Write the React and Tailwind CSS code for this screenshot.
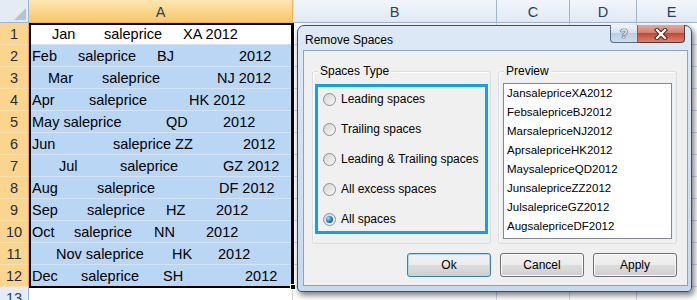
import React from 'react';

const rows = [
  [[52, 'Jan'], [104, 'saleprice'], [183, 'XA 2012']],
  [[32, 'Feb'], [78, 'saleprice'], [157, 'BJ'], [239, '2012']],
  [[48, 'Mar'], [102, 'saleprice'], [217, 'NJ 2012']],
  [[32, 'Apr'], [89, 'saleprice'], [189, 'HK 2012']],
  [[32, 'May saleprice'], [166, 'QD'], [223, '2012']],
  [[32, 'Jun'], [113, 'saleprice ZZ'], [243, '2012']],
  [[59, 'Jul'], [120, 'saleprice'], [223, 'GZ 2012']],
  [[32, 'Aug'], [97, 'saleprice'], [219, 'DF 2012']],
  [[32, 'Sep'], [87, 'saleprice'], [166, 'HZ'], [216, '2012']],
  [[32, 'Oct'], [74, 'saleprice'], [154, 'NN'], [206, '2012']],
  [[56, 'Nov saleprice'], [172, 'HK'], [218, '2012']],
  [[32, 'Dec'], [81, 'saleprice'], [163, 'SH'], [245, '2012']],
];

const preview = [
  'JansalepriceXA2012',
  'FebsalepriceBJ2012',
  'MarsalepriceNJ2012',
  'AprsalepriceHK2012',
  'MaysalepriceQD2012',
  'JunsalepriceZZ2012',
  'JulsalepriceGZ2012',
  'AugsalepriceDF2012',
];

const options = [
  'Leading spaces',
  'Trailing spaces',
  'Leading & Trailing spaces',
  'All excess spaces',
  'All spaces',
];

// cell A starts at x = 29
function CellText({ tokens }) {
  return (
    <div className="flex h-full items-center pt-[2px] whitespace-nowrap overflow-hidden">
      {tokens.map(([x, t], i) => (
        <span
          key={i}
          className="shrink-0 whitespace-pre"
          style={{
            marginLeft: i === 0 ? x - 29 : 0,
            width: i < tokens.length - 1 ? tokens[i + 1][0] - x : undefined,
          }}
        >
          {t}
        </span>
      ))}
    </div>
  );
}

function Radio({ checked }) {
  return (
    <div className="w-[13px] h-[13px] rounded-full border border-[#8f8f8f] bg-[linear-gradient(135deg,#d4d4d4,#f7f7f7)] flex items-center justify-center shrink-0">
      {checked && (
        <div className="w-[7px] h-[7px] rounded-full bg-[radial-gradient(circle_at_35%_35%,#9bdcff,#1a78c2_55%,#0a3f6e)]" />
      )}
    </div>
  );
}

function Button({ label, isDefault }) {
  return (
    <div
      className={
        'w-[84px] h-[24px] rounded-[3px] border flex items-center justify-center text-[12px] text-black bg-[linear-gradient(#f2f2f2,#ebebeb_50%,#dddddd_50%,#cfcfcf)] ' +
        (isDefault
          ? 'border-[#3c7fb1] shadow-[inset_0_0_0_1px_#a6dcf7]'
          : 'border-[#707070] shadow-[inset_0_0_0_1px_#fbfbfb]')
      }
    >
      {label}
    </div>
  );
}

export default function App() {
  const headCell = 'h-[23px] pt-[3px] border-r border-b border-[#9eb6ce] flex items-center justify-center text-[#27415f] bg-[linear-gradient(#f3f6fb,#e1e9f4)]';

  return (
    <div className="relative w-[697px] h-[300px] overflow-hidden bg-white font-['Liberation_Sans',Arial,sans-serif]">
      {/* sheet */}
      <div className="grid grid-cols-[29px_264px_204px_73px_67px_70px] w-[707px] text-[14.5px]">
        <div className="h-[23px] border-r border-b border-[#9eb6ce] bg-[#e4ebf5] flex items-end justify-end pr-[2px] pb-[2px]">
          <svg width="12" height="12" viewBox="0 0 12 12">
            <polygon points="12,0 12,12 0,12" fill="#b4c2d4" />
          </svg>
        </div>
        <div className="h-[23px] pt-[3px] border-r border-b border-[#f0b54d] flex items-center justify-center text-[#27415f] bg-[linear-gradient(#fce6b2,#f7c866)]">A</div>
        <div className={headCell}>B</div>
        <div className={headCell}>C</div>
        <div className={headCell}>D</div>
        <div className={headCell}>E</div>

        {rows.map((tokens, i) => (
          <React.Fragment key={i}>
            <div className="h-[22px] pt-[2px] border-r border-b border-r-[#e6a83d] border-b-[#f6e0ad] bg-[#fbd58d] flex items-center justify-center text-[#1e2d42]">
              {i + 1}
            </div>
            <div className={'h-[22px] border-r border-b border-[#d5e3f4] text-black ' + (i === 0 ? 'bg-white' : 'bg-[#bad6f5]')}>
              <CellText tokens={tokens} />
            </div>
            <div className="h-[22px] border-r border-b border-[#d0d7e5]" />
            <div className="h-[22px] border-r border-b border-[#d0d7e5]" />
            <div className="h-[22px] border-r border-b border-[#d0d7e5]" />
            <div className="h-[22px] border-r border-b border-[#d0d7e5]" />
          </React.Fragment>
        ))}
        <div className="h-[22px] pt-[2px] border-r border-b border-[#9eb6ce] bg-[#e4ecf7] flex items-center justify-center text-[#27415f]">13</div>
        <div className="h-[22px] border-r border-b border-[#d0d7e5]" />
        <div className="h-[22px] border-r border-b border-[#d0d7e5]" />
        <div className="h-[22px] border-r border-b border-[#d0d7e5]" />
        <div className="h-[22px] border-r border-b border-[#d0d7e5]" />
        <div className="h-[22px] border-r border-b border-[#d0d7e5]" />
      </div>

      {/* selection border */}
      <div className="absolute left-[29px] top-[23px] w-[265px] h-[265px] border-2 border-r-[3px] border-black">
        <div className="absolute -right-[5px] -bottom-[4px] w-[6px] h-[6px] bg-black border border-white" />
      </div>

      {/* dialog */}
      <div className="absolute left-[297px] top-[25px] w-[395px] h-[267px] rounded-t-[7px] rounded-b-[4px] border border-[#3d4f64] bg-[linear-gradient(180deg,#dde9f6,#c6d9ef)] shadow-[2px_3px_6px_rgba(0,0,0,0.55)] flex flex-col pl-[5px] pr-[3px] pb-[5px] text-[12px]">
        <div className="h-[24px] flex items-start">
          <span className="pt-[7px] pl-[2px] leading-[14px] text-black">Remove Spaces</span>
          <div className="ml-auto mr-[3px] -mt-[1px] flex">
            <div className="w-[28px] h-[18px] rounded-bl-[4px] border border-t-0 border-[#596c84] bg-[linear-gradient(#eef3fa,#d3e0ef_50%,#bccee4_50%,#cddcee)] flex items-center justify-center font-bold text-[13px] leading-none text-[#e9edf2] [text-shadow:0_0_1px_#2c3e55,0_0_1px_#2c3e55,0_0_1px_#2c3e55]">
              ?
            </div>
            <div className="w-[47px] h-[18px] rounded-br-[4px] border border-t-0 border-l-0 border-[#5a3a36] bg-[linear-gradient(#e5a99d,#d37a68_50%,#c04a33_50%,#d88272)] flex items-center justify-center">
              <svg width="16" height="12" viewBox="0 0 16 12">
                <path d="M4 2 L12 10 M12 2 L4 10" stroke="#4a2520" strokeWidth="4.2" strokeLinecap="square" />
                <path d="M4 2 L12 10 M12 2 L4 10" stroke="#ffffff" strokeWidth="2.2" strokeLinecap="square" />
              </svg>
            </div>
          </div>
        </div>

        <div className="flex-1 border border-[#8da3ba] bg-[#f0f0f0] flex flex-col pl-[8px] pr-[10px] text-black">
          <div className="flex gap-[7px] mt-[20px]">
            {/* Spaces Type */}
            <div className="w-[179px] h-[173px] border border-[#d5dfe5] rounded-[3px] shadow-[inset_1px_1px_0_#ffffff] flex flex-col">
              <div className="-mt-[8px] ml-[5px] w-fit px-[2px] bg-[#f0f0f0] leading-[14px]">Spaces Type</div>
              <div className="mt-[6px] mx-[2px] h-[150px] border-[3px] border-[#13a1e3] flex flex-col gap-[6px] pl-[5px]">
                {options.map((o, i) => (
                  <div key={o} className="h-[24px] flex items-center gap-[5px] whitespace-nowrap">
                    <Radio checked={i === 4} />
                    <span>{o}</span>
                  </div>
                ))}
              </div>
            </div>

            {/* Preview */}
            <div className="w-[179px] h-[173px] border border-[#d5dfe5] rounded-[3px] shadow-[inset_1px_1px_0_#ffffff] flex flex-col">
              <div className="-mt-[8px] ml-[5px] w-fit px-[2px] bg-[#f0f0f0] leading-[14px]">Preview</div>
              <div className="mt-[5px] mx-[4px] h-[156px] border border-[#828790] bg-white pl-[3px] text-[11.5px] leading-[19px]">
                {preview.map((p) => (
                  <div key={p}>{p}</div>
                ))}
              </div>
            </div>
          </div>

          <div className="mt-[9px] flex justify-end gap-[9px]">
            <Button label="Ok" isDefault />
            <Button label="Cancel" />
            <Button label="Apply" />
          </div>
        </div>
      </div>
    </div>
  );
}
